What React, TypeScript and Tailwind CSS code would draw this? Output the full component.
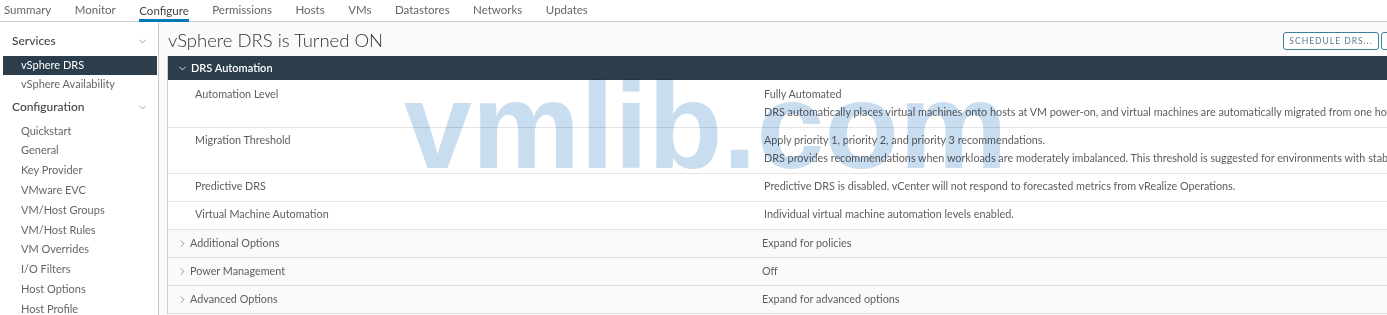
import { ChevronDown, ChevronRight } from 'lucide-react';

const tabs = ['Summary', 'Monitor', 'Configure', 'Permissions', 'Hosts', 'VMs', 'Datastores', 'Networks', 'Updates'];

const configItems = [
  'Quickstart',
  'General',
  'Key Provider',
  'VMware EVC',
  'VM/Host Groups',
  'VM/Host Rules',
  'VM Overrides',
  'I/O Filters',
  'Host Options',
  'Host Profile',
];

const drsRows = [
  {
    label: 'Automation Level',
    h: 'h-[48px] pt-[5px]',
    lines: [
      'Fully Automated',
      'DRS automatically places virtual machines onto hosts at VM power-on, and virtual machines are automatically migrated from one host to another to optimize resource utilization.',
    ],
  },
  {
    label: 'Migration Threshold',
    h: 'h-[46px] pt-[3px]',
    lines: [
      'Apply priority 1, priority 2, and priority 3 recommendations.',
      'DRS provides recommendations when workloads are moderately imbalanced. This threshold is suggested for environments with stable workloads.',
    ],
  },
  {
    label: 'Predictive DRS',
    h: 'h-[28px] pt-[3px]',
    lines: ['Predictive DRS is disabled. vCenter will not respond to forecasted metrics from vRealize Operations.'],
  },
  {
    label: 'Virtual Machine Automation',
    h: 'h-[28px] pt-[3px]',
    lines: ['Individual virtual machine automation levels enabled.'],
  },
];

const collapsed = [
  { label: 'Additional Options', value: 'Expand for policies' },
  { label: 'Power Management', value: 'Off' },
  { label: 'Advanced Options', value: 'Expand for advanced options' },
];

function SideHeader({ title }: { title: string }) {
  return (
    <div className="h-5 flex items-center justify-between pl-3 pr-[10px] text-[12px] text-[#444] font-medium">
      <span>{title}</span>
      <ChevronDown size={11} strokeWidth={1.5} className="text-[#777]" />
    </div>
  );
}

export default function App() {
  return (
    <div className="w-[1387px] h-[315px] overflow-hidden relative bg-white text-[#5e5e5e] font-['Lato',_'Liberation_Sans',_sans-serif]">
      {/* tabs */}
      <div className="h-[22px] flex items-stretch gap-[23.5px] pl-[4px] border-b border-[#cccccc]">
        {tabs.map((t) => (
          <div
            key={t}
            className={
              t === 'Configure'
                ? 'flex items-center text-[11.5px] text-[#444] border-b-[3px] border-[#0079b8] pt-[2px] -mb-px'
                : 'flex items-center text-[11.5px] text-[#666] pb-px'
            }
          >
            {t}
          </div>
        ))}
      </div>

      <div className="flex h-[293px]">
        {/* sidebar */}
        <aside className="w-[159px] shrink-0 border-r border-[#cccccc] pt-[9px]">
          <SideHeader title="Services" />
          <div className="mt-[5px] ml-[3px] mr-px h-[19px] flex items-center pl-[18px] bg-[#2c3e4c] text-white text-[11px]">
            vSphere DRS
          </div>
          <div className="h-[19px] flex items-center pl-[21px] text-[11px] text-[#666]">vSphere Availability</div>
          <div className="mt-[3px]">
            <SideHeader title="Configuration" />
          </div>
          <div className="mt-1">
            {configItems.map((c) => (
              <div key={c} className="h-[19.8px] flex items-center pl-[21px] text-[11px] text-[#666]">
                {c}
              </div>
            ))}
          </div>
        </aside>

        {/* main */}
        <main className="flex-1 min-w-0 bg-[#fafafa]">
          <div className="h-[34px] flex items-center justify-between pt-[4px] pl-[9px]">
            <h1 className="text-[18.5px] text-[#333] font-light">vSphere DRS is Turned ON</h1>
            <div className="flex gap-[2px] -mr-[90px]">
              <button className="h-[18px] w-[96px] border border-[#3d7f99] rounded-[3px] text-[8.5px] tracking-[1px] text-[#5a7c8c] bg-white">
                SCHEDULE DRS...
              </button>
              <button className="h-[18px] w-[96px] border border-[#3d7f99] rounded-[3px] text-[8.5px] tracking-[1px] text-[#5a7c8c] bg-white">
                RUN DRS NOW
              </button>
            </div>
          </div>

          <div className="ml-[8px] border-l border-[#cccccc] bg-white text-[10.8px] whitespace-nowrap">
            <div className="h-6 flex items-center bg-[#2c3e4c] text-white font-semibold pl-[9px] gap-[3px] text-[11px]">
              <ChevronDown size={11} strokeWidth={1.8} />
              <span>DRS Automation</span>
            </div>
            {drsRows.map((r) => (
              <div key={r.label} className={`${r.h} flex border-b border-[#e4e4e4] leading-[18px]`}>
                <div className="w-[596px] shrink-0 pl-[27px]">{r.label}</div>
                <div>
                  {r.lines.map((l) => (
                    <div key={l}>{l}</div>
                  ))}
                </div>
              </div>
            ))}
            {collapsed.map((r) => (
              <div key={r.label} className="h-[28px] flex items-center bg-[#fafafa] border-b border-[#dddddd]">
                <div className="w-[594px] shrink-0 flex items-center pl-[9px] gap-[2px]">
                  <ChevronRight size={11} strokeWidth={1.5} className="text-[#666]" />
                  <span>{r.label}</span>
                </div>
                <div>{r.value}</div>
              </div>
            ))}
          </div>
        </main>
      </div>

      {/* watermark */}
      <div className="absolute left-[404px] top-[65px] pointer-events-none text-[122px] leading-none font-bold text-[#c9ddf0] mix-blend-multiply font-['Liberation_Sans',_Arial,_sans-serif]">
        vmlib.com
      </div>
    </div>
  );
}
